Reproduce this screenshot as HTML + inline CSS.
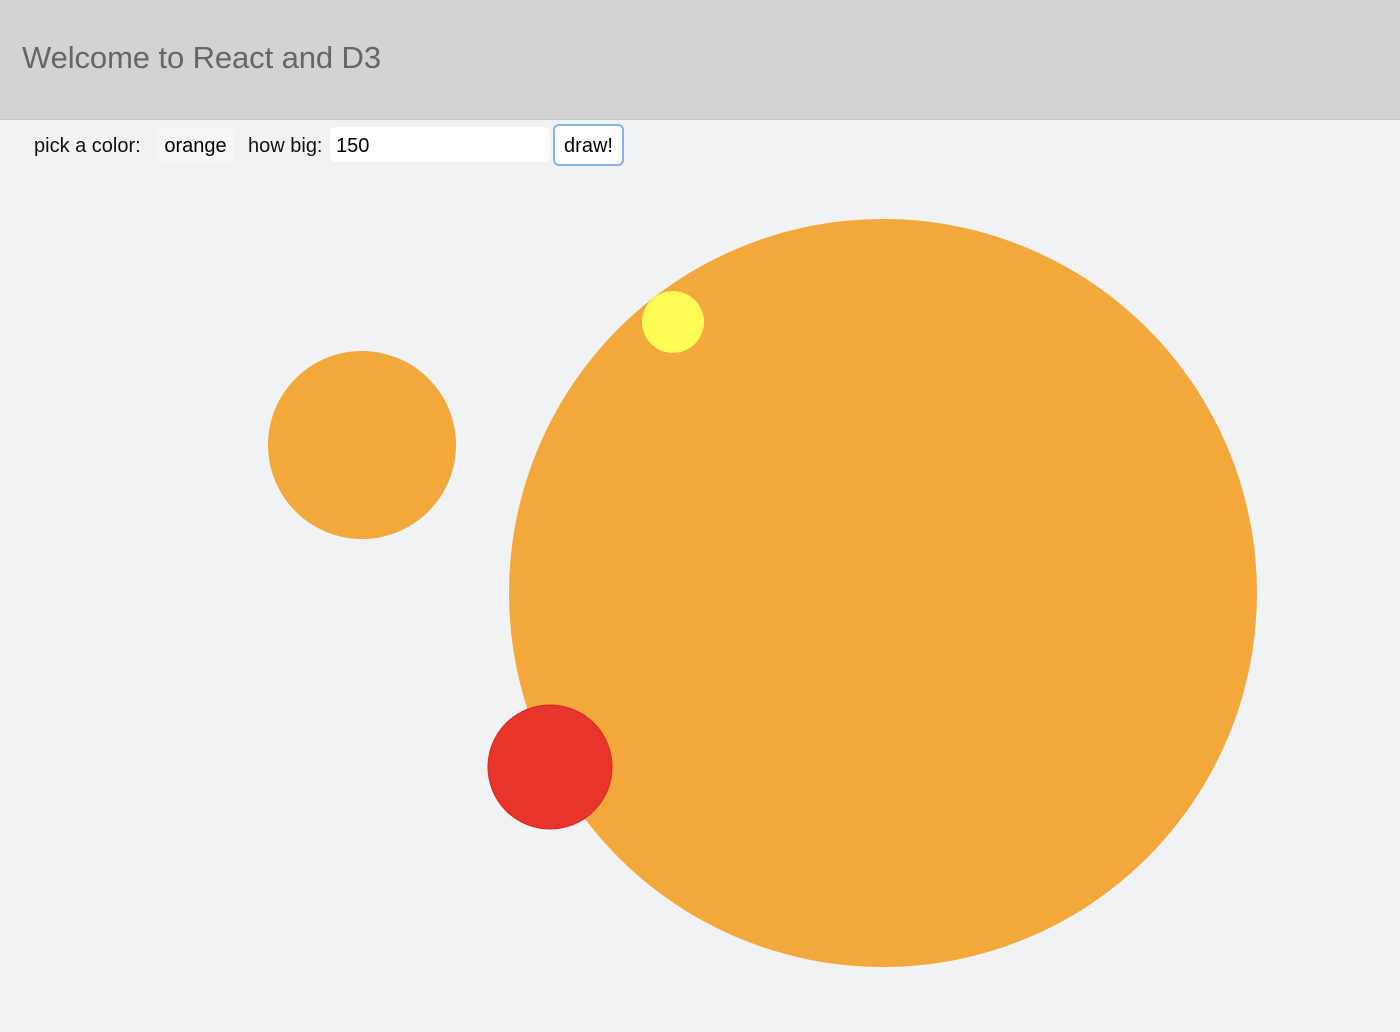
<!DOCTYPE html>
<html><head><style>
body{margin:0;width:1400px;height:1032px;background:#f1f2f4;font-family:"Liberation Sans",sans-serif;overflow:hidden;position:relative}
.hd{position:absolute;left:0;top:0;width:1400px;height:119px;background:#d3d3d3;border-bottom:1px solid #c8c8c8}
.hd h1{position:absolute;left:22px;top:40px;margin:0;font-weight:normal;font-size:31px;color:#666;letter-spacing:-0.1px}
.t{position:absolute;font-size:20px;color:#111;top:135px}
.box{position:absolute;border-radius:6px;font-size:20px;line-height:38px}
svg{position:absolute;left:0;top:0}
</style></head><body>
<div class="hd"><h1>Welcome to React and D3</h1></div>
<div class="t" style="left:34px">pick a color:</div>
<div class="box" style="left:157px;top:127px;width:77px;height:35px;background:#f6f6f7;text-align:center">orange</div>
<div class="t" style="left:248px">how big:</div>
<div class="box" style="left:330px;top:127px;width:220px;height:35px;background:#fff;padding-left:6px;box-sizing:border-box;color:#000">150</div>
<div class="box" style="left:553px;top:124px;width:71px;height:42px;border:2px solid #88b4ee;box-sizing:border-box;background:#fff;text-align:center;line-height:40px">draw!</div>
<svg width="1400" height="1032">
<circle cx="883" cy="593" r="374" fill="#f2a83b"/>
<circle cx="362" cy="445" r="94" fill="#f2a83b"/>
<circle cx="673" cy="322" r="31" fill="#fffc55"/>
<circle cx="550" cy="767" r="62" fill="#e8342a" stroke="#d82a22" stroke-width="1"/>
</svg>
</body></html>
